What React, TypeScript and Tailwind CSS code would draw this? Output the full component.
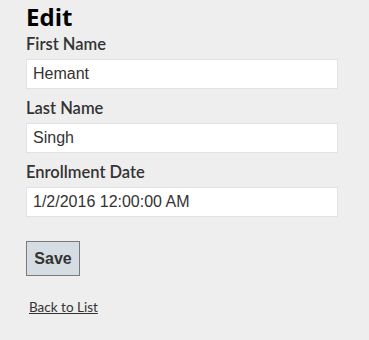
import React from "react";

const labelCls =
  "block text-[16.5px] leading-[20px] font-semibold text-[#333333] [font-family:Lato,'Open_Sans',sans-serif]";
const inputCls =
  "block w-[312px] h-[30px] bg-white border border-[#e2e2e2] px-[6px] text-[16px] text-[#333333] [font-family:'Liberation_Sans',Arial,sans-serif] outline-none";

export default function App() {
  return (
    <div className="min-h-[340px] w-full bg-[#eeeeee] pl-[26px] pt-[3px]">
      <h2 className="text-[24px] leading-[28px] font-bold text-black [font-family:'Open_Sans','Noto_Sans',sans-serif]">
        Edit
      </h2>
      <form className="flex flex-col">
        <label className={`${labelCls} mt-[3px]`}>First Name</label>
        <input className={`${inputCls} mt-[5px]`} defaultValue="Hemant" />
        <label className={`${labelCls} mt-[9px]`}>Last Name</label>
        <input className={`${inputCls} mt-[5px]`} defaultValue="Singh" />
        <label className={`${labelCls} mt-[9px]`}>Enrollment Date</label>
        <input
          className={`${inputCls} mt-[5px]`}
          defaultValue="1/2/2016 12:00:00 AM"
        />
        <div className="mt-[24px]">
          <button
            type="button"
            className="h-[35px] w-[54px] border border-[#7a7a7a] bg-[#d5dde3] text-[16px] font-bold text-[#333333] [font-family:'Liberation_Sans',Arial,sans-serif]"
          >
            Save
          </button>
        </div>
      </form>
      <div className="mt-[18px] pl-[3px]">
        <a
          href="#"
          className="text-[13.5px] leading-[20px] text-[#333333] underline [font-family:Lato,'Open_Sans',sans-serif]"
        >
          Back to List
        </a>
      </div>
    </div>
  );
}
